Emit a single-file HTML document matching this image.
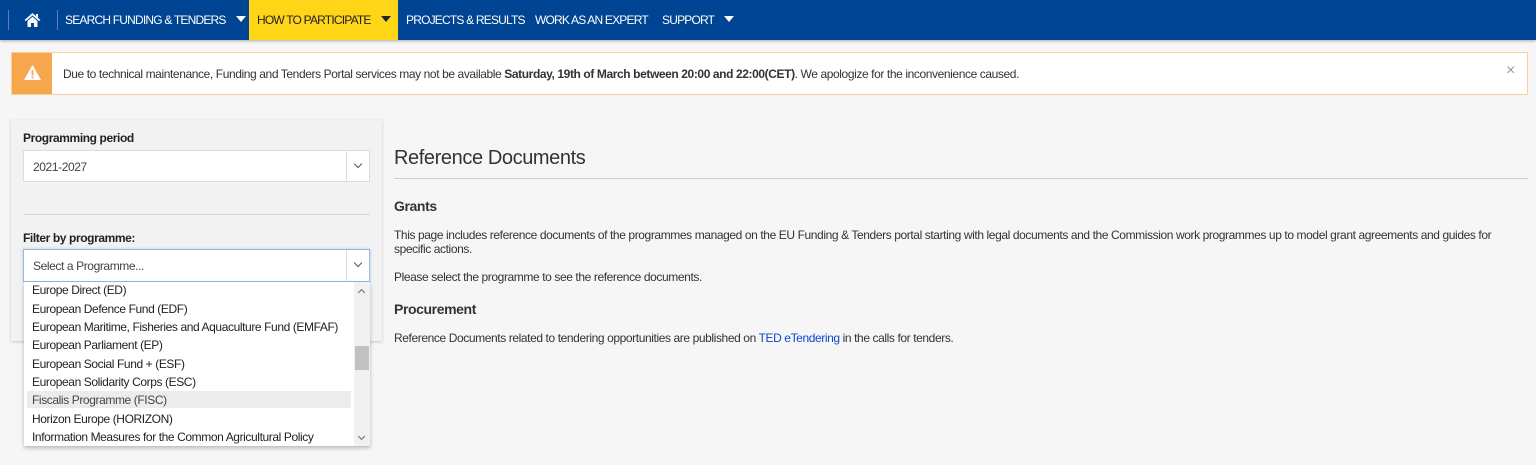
<!DOCTYPE html><html><head><style>
*{box-sizing:border-box;margin:0;padding:0}
body{width:1536px;height:465px;background:#f6f6f6;font-family:"Liberation Sans",sans-serif;color:#333;position:relative;overflow:hidden;letter-spacing:-0.4px}
.nav{position:absolute;left:0;top:0;width:1536px;height:40px;background:#004494;box-shadow:0 1px 3px rgba(0,0,0,.3)}
.nav .it{position:absolute;top:0;height:40px;line-height:41px;color:#fff;font-size:12px;letter-spacing:-0.8px;white-space:nowrap}
.sep{position:absolute;top:10px;width:1px;height:20px;background:#5f7fb8}
.tri{display:inline-block;width:0;height:0;border-left:5px solid transparent;border-right:5px solid transparent;border-top:6px solid currentColor;margin-left:10px;vertical-align:2px}
.alert{position:absolute;left:11px;top:52px;width:1517px;height:43px;background:#fff;border:1px solid #fbcf9b}
.alert .ic{position:absolute;left:0;top:0;width:40px;height:41px;background:#f6a74c}
.alert .tx{position:absolute;left:51px;top:14px;font-size:12px;color:#333;white-space:nowrap}
.panel{position:absolute;left:11px;top:120px;width:371px;height:221px;background:#f2f2f2;box-shadow:0 1px 3px rgba(0,0,0,.2)}
.lbl{position:absolute;left:23px;font-size:12px;font-weight:bold;color:#222}
.sel{position:absolute;left:23px;width:347px;height:32px;background:#fff;border:1px solid #ddd;font-size:12px;color:#444;padding:9px 0 0 9px}
.sel .ar{position:absolute;right:0;top:0;width:23px;height:100%;border-left:1px solid #ddd}
.sel .ar:after{content:"";position:absolute;left:8px;top:10px;width:5px;height:5px;border-right:1.5px solid #555;border-bottom:1.5px solid #555;transform:rotate(45deg)}
.dd{position:absolute;left:24px;top:282px;width:346px;height:164px;background:#fff;box-shadow:0 2px 4px rgba(0,0,0,.25)}
.dd div.o{position:absolute;left:8px;font-size:12px;color:#222;white-space:nowrap}
h1{position:absolute;left:394px;top:147px;font-size:20px;font-weight:normal;color:#333;letter-spacing:-0.4px}
.t{position:absolute;left:394px;font-size:12px;color:#333}
.h{position:absolute;left:394px;font-size:14px;font-weight:bold;color:#333}
</style></head><body>
<div class="nav">
<div class="sep" style="left:8px"></div><div class="sep" style="left:57px"></div>
<svg style="position:absolute;left:24px;top:12px" width="17" height="15" viewBox="0 0 17 15"><path d="M8.5 1 L0.5 8 L2 9 L8.5 3.5 L15 9 L16.5 8 Z M3.5 9 L3.5 15 L7 15 L7 11 L10 11 L10 15 L13.5 15 L13.5 9 L8.5 4.8 Z M12 2 L14 2 L14 5.5 L12 4 Z" fill="#fff"/></svg>
<div class="it" style="left:65px">SEARCH FUNDING &amp; TENDERS<span class="tri"></span></div>
<div class="it" style="left:249px;width:149px;background:#ffd617;color:#222;padding-left:8px">HOW TO PARTICIPATE<span class="tri"></span></div>
<div class="it" style="left:406px">PROJECTS &amp; RESULTS</div>
<div class="it" style="left:535px">WORK AS AN EXPERT</div>
<div class="it" style="left:662px">SUPPORT<span class="tri"></span></div>
</div>
<div class="alert"><div class="ic"><svg style="position:absolute;left:12px;top:12px" width="17" height="15" viewBox="0 0 17 15"><path d="M8.5 0 L17 15 L0 15 Z" fill="#fff"/><rect x="7.6" y="5" width="1.8" height="5.5" fill="#f6a74c"/><rect x="7.6" y="11.5" width="1.8" height="1.8" fill="#f6a74c"/></svg></div>
<div class="tx">Due to technical maintenance, Funding and Tenders Portal services may not be available <b>Saturday, 19th of March between 20:00 and 22:00(CET)</b>. We apologize for the inconvenience caused.</div>
<div style="position:absolute;right:12px;top:9px;font-size:16px;color:#999">×</div></div>
<div class="panel"></div>
<div class="lbl" style="top:131px">Programming period</div>
<div class="sel" style="top:150px">2021-2027<div class="ar"></div></div>
<div style="position:absolute;left:23px;top:214px;width:347px;height:1px;background:#d8d8d8"></div>
<div class="lbl" style="top:231px">Filter by programme:</div>
<div class="sel" style="top:249px;height:33px;border-color:#9bb9dd;box-shadow:0 0 3px rgba(80,140,220,.4)">Select a Programme...<div class="ar"></div></div>
<div class="dd">
<div style="position:absolute;left:3px;top:109px;width:324px;height:17px;background:#ececec"></div>
<div class="o" style="top:1px">Europe Direct (ED)</div>
<div class="o" style="top:20px">European Defence Fund (EDF)</div>
<div class="o" style="top:38px">European Maritime, Fisheries and Aquaculture Fund (EMFAF)</div>
<div class="o" style="top:56px">European Parliament (EP)</div>
<div class="o" style="top:75px">European Social Fund + (ESF)</div>
<div class="o" style="top:93px">European Solidarity Corps (ESC)</div>
<div class="o" style="top:111px;color:#444">Fiscalis Programme (FISC)</div>
<div class="o" style="top:130px">Horizon Europe (HORIZON)</div>
<div class="o" style="top:148px">Information Measures for the Common Agricultural Policy</div>
<div style="position:absolute;left:330px;top:0;width:16px;height:164px;background:#f1f1f1"></div>
<div style="position:absolute;left:331px;top:64px;width:14px;height:24px;background:#c1c1c1"></div>
<div style="position:absolute;left:335px;top:8px;width:5px;height:5px;border-left:1.3px solid #666;border-top:1.3px solid #666;transform:rotate(45deg)"></div>
<div style="position:absolute;left:335px;top:152px;width:5px;height:5px;border-right:1.3px solid #666;border-bottom:1.3px solid #666;transform:rotate(45deg)"></div>
</div>
<h1>Reference Documents</h1>
<div style="position:absolute;left:394px;top:178px;width:1134px;height:1px;background:#ccc"></div>
<div class="h" style="top:198px">Grants</div>
<div class="t" style="top:228px;width:1130px;line-height:14px">This page includes reference documents of the programmes managed on the EU Funding &amp; Tenders portal starting with legal documents and the Commission work programmes up to model grant agreements and guides for specific actions.</div>
<div class="t" style="top:270px">Please select the programme to see the reference documents.</div>
<div class="h" style="top:301px">Procurement</div>
<div class="t" style="top:331px">Reference Documents related to tendering opportunities are published on <span style="color:#0e47cb">TED eTendering</span> in the calls for tenders.</div>
</body></html>
